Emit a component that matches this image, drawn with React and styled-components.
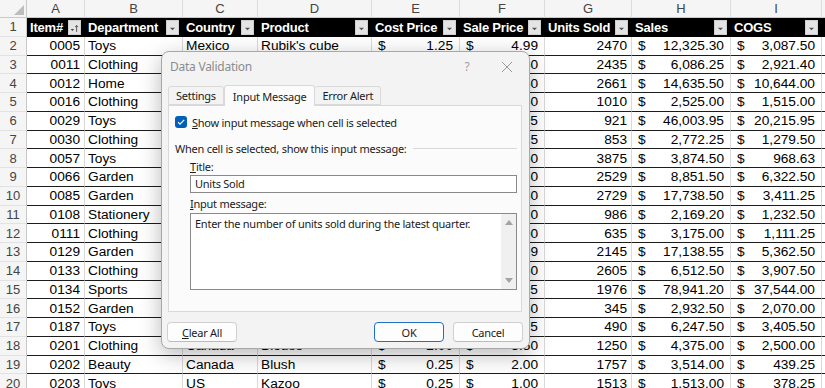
import React from 'react'
import styled, { createGlobalStyle } from 'styled-components'

const GlobalStyle = createGlobalStyle`
  html, body {
    margin: 0;
    padding: 0;
    background: #fff;
  }
  body {
    width: 825px;
    height: 388px;
    overflow: hidden;
    font-family: "Liberation Sans", Arial, sans-serif;
  }
`

const letters = ['A', 'B', 'C', 'D', 'E', 'F', 'G', 'H', 'I', '']
const headers = ['Item#', 'Department', 'Country', 'Product', 'Cost Price', 'Sale Price', 'Units Sold', 'Sales', 'COGS']

const rows = [
  ['0005', 'Toys', 'Mexico', "Rubik's cube", '1.25', '4.99', '2470', '12,325.30', '3,087.50'],
  ['0011', 'Clothing', 'Mexico', 'Scarf', '1.20', '2.50', '2435', '6,086.25', '2,921.40'],
  ['0012', 'Home', 'US', 'Lamp', '4.00', '5.50', '2661', '14,635.50', '10,644.00'],
  ['0016', 'Clothing', 'Canada', 'Socks', '1.50', '2.50', '1010', '2,525.00', '1,515.00'],
  ['0029', 'Toys', 'US', 'Drone', '21.95', '49.95', '921', '46,003.95', '20,215.95'],
  ['0030', 'Clothing', 'Mexico', 'Hat', '1.50', '3.25', '853', '2,772.25', '1,279.50'],
  ['0057', 'Toys', 'US', 'Yo-yo', '0.25', '1.00', '3875', '3,874.50', '968.63'],
  ['0066', 'Garden', 'Canada', 'Trowel', '2.50', '3.50', '2529', '8,851.50', '6,322.50'],
  ['0085', 'Garden', 'US', 'Seeds', '1.25', '6.50', '2729', '17,738.50', '3,411.25'],
  ['0108', 'Stationery', 'Mexico', 'Notebook', '1.25', '2.20', '986', '2,169.20', '1,232.50'],
  ['0111', 'Clothing', 'US', 'Gloves', '1.75', '5.00', '635', '3,175.00', '1,111.25'],
  ['0129', 'Garden', 'Canada', 'Hose', '2.50', '7.99', '2145', '17,138.55', '5,362.50'],
  ['0133', 'Clothing', 'US', 'Tie', '1.50', '2.50', '2605', '6,512.50', '3,907.50'],
  ['0134', 'Sports', 'Mexico', 'Racket', '19.00', '39.95', '1976', '78,941.20', '37,544.00'],
  ['0152', 'Garden', 'US', 'Rake', '6.00', '8.50', '345', '2,932.50', '2,070.00'],
  ['0187', 'Toys', 'Canada', 'Puzzle', '6.95', '12.75', '490', '6,247.50', '3,405.50'],
  ['0201', 'Clothing', 'Canada', 'Blouse', '2.00', '3.50', '1250', '4,375.00', '2,500.00'],
  ['0202', 'Beauty', 'Canada', 'Blush', '0.25', '2.00', '1757', '3,514.00', '439.25'],
  ['0203', 'Toys', 'US', 'Kazoo', '0.25', '1.00', '1513', '1,513.00', '378.25'],
]

function FilterIcon({ sorted }) {
  return (
    <FilterBtn>
      <svg width="13" height="15" viewBox="0 0 13 15">
        {sorted ? (
          <>
            <path d="M2 8 L6 8 L4 10.5 Z" fill="#444" />
            <path d="M9 4 V11.5 M7.2 5.8 L9 4 L10.8 5.8" stroke="#444" strokeWidth="1" fill="none" />
          </>
        ) : (
          <path d="M3.5 6.5 L9.5 6.5 L6.5 9.5 Z" fill="#555" />
        )}
      </svg>
    </FilterBtn>
  )
}

function Check() {
  return (
    <CheckBox>
      <svg width="12" height="12" viewBox="0 0 12 12">
        <path d="M3 6.2 L5 8.2 L9.2 3.8" stroke="#fff" strokeWidth="1.2" fill="none" />
      </svg>
    </CheckBox>
  )
}

function DataValidation() {
  return (
    <Dialog>
      <TitleBar>
        <TitleText>Data Validation</TitleText>
        <Help>?</Help>
        <Close>
          <svg width="12" height="12" viewBox="0 0 12 12">
            <path d="M1 1 L11 11 M11 1 L1 11" stroke="#9a9a9a" strokeWidth="1" />
          </svg>
        </Close>
      </TitleBar>
      <Tabs>
        <Tab>Settings</Tab>
        <Tab $active>Input Message</Tab>
        <Tab>Error Alert</Tab>
      </Tabs>
      <Panel>
        <CheckRow>
          <Check />
          <span><u>S</u>how input message when cell is selected</span>
        </CheckRow>
        <GroupLabel>
          <span>When cell is selected, show this input message:</span>
          <Rule />
        </GroupLabel>
        <Field>
          <FieldLabel $top="5px" $bottom="1px"><u>T</u>itle:</FieldLabel>
          <TextBox>Units Sold</TextBox>
          <FieldLabel $top="4px" $bottom="2px"><u>I</u>nput message:</FieldLabel>
          <TextArea>
            <AreaText>Enter the number of units sold during the latest quarter.</AreaText>
            <ScrollBar>
              <Arrow $up />
              <Arrow />
            </ScrollBar>
          </TextArea>
        </Field>
      </Panel>
      <Buttons>
        <Button><u>C</u>lear All</Button>
        <Spacer />
        <Button $primary>OK</Button>
        <Button>Cancel</Button>
      </Buttons>
    </Dialog>
  )
}

export default function App() {
  return (
    <>
      <GlobalStyle />
      <Sheet>
        <Corner />
        {letters.map((l, i) => (
          <ColLetter key={i}>{l}</ColLetter>
        ))}
        <RowNum>1</RowNum>
        {headers.map((h, i) => (
          <HeadCell key={h}>
            <span>{h}</span>
            <FilterIcon sorted={i === 0} />
          </HeadCell>
        ))}
        <HeadCell />
        {rows.map((r, i) => (
          <React.Fragment key={r[0]}>
            <RowNum>{i + 2}</RowNum>
            <Cell $align="flex-end" $pad="0 4px 0 0">{r[0]}</Cell>
            <Cell>{r[1]}</Cell>
            <Cell>{r[2]}</Cell>
            <Cell>{r[3]}</Cell>
            <MoneyCell><span>$</span><span>{r[4]}</span></MoneyCell>
            <MoneyCell><span>$</span><span>{r[5]}</span></MoneyCell>
            <Cell $align="flex-end" $pad="0 4px 0 0">{r[6]}</Cell>
            <MoneyCell><span>$</span><span>{r[7]}</span></MoneyCell>
            <MoneyCell><span>$</span><span>{r[8]}</span></MoneyCell>
            <Cell />
          </React.Fragment>
        ))}
        <DataValidation />
      </Sheet>
    </>
  )
}

const Sheet = styled.div`
  position: relative;
  display: grid;
  grid-template-columns: 27px 58px 98px 75px 114px 88px 85px 87px 99px 91px 1fr;
  grid-template-rows: 18px;
  grid-auto-rows: 18.75px;
  width: 825px;
  height: 388px;
  overflow: hidden;
  font-size: 13.7px;
  color: #000;
`

const Corner = styled.div`
  position: relative;
  background: #f5f5f5;
  border-right: 1px solid #c9c9c9;
  border-bottom: 1px solid #c9c9c9;

  &::after {
    content: '';
    position: absolute;
    right: 2px;
    bottom: 2px;
    width: 10px;
    height: 10px;
    background: #bdbdbd;
    clip-path: polygon(100% 0, 100% 100%, 0 100%);
  }
`

const ColLetter = styled.div`
  box-sizing: border-box;
  display: flex;
  align-items: center;
  justify-content: center;
  background: #f5f5f5;
  border-right: 1px solid #dcdcdc;
  border-bottom: 1px solid #c9c9c9;
  color: #444;
  font-size: 13px;
`

const RowNum = styled.div`
  box-sizing: border-box;
  display: flex;
  align-items: center;
  justify-content: center;
  background: #f5f5f5;
  border-right: 1px solid #c9c9c9;
  border-bottom: 1px solid #e2e2e2;
  color: #444;
  font-size: 13px;
`

const HeadCell = styled.div`
  box-sizing: border-box;
  display: flex;
  align-items: center;
  justify-content: space-between;
  padding: 0 3px 0 3px;
  background: #000;
  color: #fff;
  font-size: 13px;
  font-weight: bold;
  letter-spacing: -0.2px;
  white-space: nowrap;
  overflow: hidden;
`

const FilterBtn = styled.div`
  display: flex;
  flex-shrink: 0;
  width: 13px;
  height: 15px;
  background: #e4e4e4;
  border: 1px solid #cfcfcf;
  box-sizing: border-box;
  margin-right: 1px;
`

const Cell = styled.div`
  box-sizing: border-box;
  display: flex;
  align-items: center;
  justify-content: ${(p) => p.$align || 'flex-start'};
  padding: ${(p) => p.$pad || '0 0 0 3px'};
  background: #fff;
  border-right: 1px solid #d9d9d9;
  border-bottom: 1px solid #1c1c1c;
  white-space: nowrap;
  overflow: hidden;
`

const MoneyCell = styled(Cell)`
  justify-content: space-between;
  padding: 0 6px;
`

const Dialog = styled.div`
  position: absolute;
  left: 161px;
  top: 51px;
  width: 369px;
  height: 298px;
  box-sizing: border-box;
  display: flex;
  flex-direction: column;
  background: #f3f3f3;
  border: 1px solid #a8a8a8;
  border-radius: 8px;
  box-shadow: 0 6px 22px rgba(0, 0, 0, 0.28);
  font-family: "Noto Sans", "Open Sans", sans-serif;
  font-size: 11px;
  letter-spacing: -0.25px;
  color: #1b1b1b;
`

const TitleBar = styled.div`
  display: flex;
  align-items: center;
  height: 29px;
  padding-left: 8px;
  color: #8c8c8c;
  font-size: 12px;
`

const TitleText = styled.div`
  flex: 1;
`

const Help = styled.div`
  width: 36px;
  text-align: center;
  color: #a0a0a0;
  font-size: 12px;
`

const Close = styled.div`
  display: flex;
  justify-content: center;
  width: 44px;
`

const Tabs = styled.div`
  display: flex;
  align-items: flex-end;
  height: 24px;
  padding-left: 6px;
  position: relative;
  z-index: 1;
`

const Tab = styled.div`
  box-sizing: border-box;
  display: flex;
  align-items: center;
  height: ${(p) => (p.$active ? '21px' : '19px')};
  padding: ${(p) => (p.$active ? '0 8px' : '0 7px')};
  margin-bottom: ${(p) => (p.$active ? '-1px' : '0')};
  background: ${(p) => (p.$active ? '#fbfbfb' : '#f3f3f3')};
  border: 1px solid #d9d9d9;
  border-bottom: ${(p) => (p.$active ? 'none' : '1px solid #d9d9d9')};
  border-left: ${(p) => (p.$active ? '1px solid #d9d9d9' : 'none')};
  border-radius: 3px 3px 0 0;

  &:first-child {
    border-left: 1px solid #d9d9d9;
  }
`

const Panel = styled.div`
  box-sizing: border-box;
  height: 207px;
  margin: 0 7px 0 6px;
  padding: 9px 4px 0 6px;
  background: #fbfbfb;
  border: 1px solid #d9d9d9;
`

const CheckRow = styled.div`
  display: flex;
  align-items: center;
  gap: 5px;
  height: 14px;
`

const CheckBox = styled.div`
  display: flex;
  width: 12px;
  height: 12px;
  border-radius: 3px;
  background: #005fb8;
`

const GroupLabel = styled.div`
  display: flex;
  align-items: center;
  margin-top: 12px;
  height: 14px;
  white-space: nowrap;
`

const Rule = styled.div`
  flex: 1;
  height: 1px;
  margin-left: 6px;
  background: #d9d9d9;
`

const Field = styled.div`
  display: flex;
  flex-direction: column;
  padding-left: 15px;
`

const FieldLabel = styled.div`
  height: 14px;
  line-height: 14px;
  margin-top: ${(p) => p.$top};
  margin-bottom: ${(p) => p.$bottom};
`

const TextBox = styled.div`
  box-sizing: border-box;
  height: 18px;
  padding: 0 4px;
  line-height: 16px;
  background: #fff;
  border: 1px solid #8a8a8a;
`

const TextArea = styled.div`
  box-sizing: border-box;
  display: flex;
  height: 77px;
  background: #fff;
  border: 1px solid #8a8a8a;
`

const AreaText = styled.div`
  flex: 1;
  padding: 2px 4px;
`

const ScrollBar = styled.div`
  display: flex;
  flex-direction: column;
  justify-content: space-between;
  align-items: center;
  width: 15px;
  padding: 6px 0;
  background: #f0f0f0;
`

const Arrow = styled.div`
  width: 0;
  height: 0;
  border-left: 4px solid transparent;
  border-right: 4px solid transparent;
  border-bottom: ${(p) => (p.$up ? '5px solid #a3a3a3' : 'none')};
  border-top: ${(p) => (p.$up ? 'none' : '5px solid #a3a3a3')};
`

const Buttons = styled.div`
  display: flex;
  gap: 9px;
  margin-top: 10px;
  padding: 0 6px 0 5px;
`

const Spacer = styled.div`
  flex: 1;
`

const Button = styled.div`
  box-sizing: border-box;
  display: flex;
  align-items: center;
  justify-content: center;
  width: 70px;
  height: 20px;
  background: #fdfdfd;
  border: 1px solid ${(p) => (p.$primary ? '#1f6fc4' : '#d0d0d0')};
  border-bottom-color: ${(p) => (p.$primary ? '#1f6fc4' : '#bcbcbc')};
  border-radius: 4px;
`
